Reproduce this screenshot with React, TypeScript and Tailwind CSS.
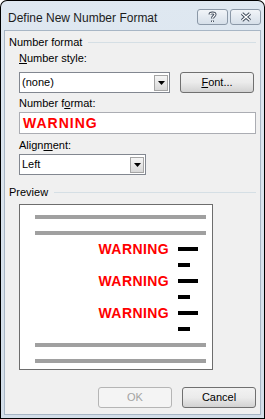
import React from 'react';

const font = { fontFamily: '"Liberation Sans", Arial, sans-serif' };

function DropArrow() {
  return (
    <div className="w-[14px] h-[16px] border border-[#a5a5a5] bg-gradient-to-b from-[#f6f6f6] to-[#d8d8d8] flex items-center justify-center">
      <svg width="7" height="4" viewBox="0 0 7 4">
        <path d="M0 0h7L3.5 4z" fill="#000" />
      </svg>
    </div>
  );
}

function Select({ value, width }: { value: string; width: string }) {
  return (
    <div className={`${width} h-[21px] bg-white border border-[#828790] flex items-center pl-[2px] pr-px`}>
      <span className="flex-1 text-[11px] text-black">{value}</span>
      <DropArrow />
    </div>
  );
}

function Button({ children, disabled }: { children: React.ReactNode; disabled?: boolean }) {
  return (
    <div
      className={
        disabled
          ? 'w-[74px] h-[21px] rounded-[3px] border border-[#b5b5b5] bg-[#f4f4f4] flex items-center justify-center text-[11px] text-[#a3a3a3]'
          : 'w-[74px] h-[21px] rounded-[3px] border border-[#707070] bg-gradient-to-b from-[#f2f2f2] via-[#ebebeb] to-[#d2d2d2] flex items-center justify-center text-[11px] text-black'
      }
    >
      {children}
    </div>
  );
}

function SectionHeader({ label }: { label: string }) {
  return (
    <div className="flex items-center h-[14px] mt-[4px]">
      <span className="text-[11px] text-black whitespace-nowrap">{label}</span>
      <div className="flex-1 h-px bg-[#d5dfe5] ml-[6px]" />
    </div>
  );
}

function Bar() {
  return (
    <div className="h-[16px] flex items-center">
      <div className="w-[171px] h-[4px] bg-[#a0a0a0]" />
    </div>
  );
}

function PreviewRow({ warning, long }: { warning?: boolean; long?: boolean }) {
  return (
    <div className="h-[16px] flex items-center">
      <div className="w-[134px] text-right text-[14px] font-bold leading-none text-[#ff0000] tracking-[0.4px]">
        {warning ? 'WARNING' : ''}
      </div>
      <div className={`ml-[9px] h-[4px] bg-black ${long ? 'w-[20px]' : 'w-[12px]'}`} />
    </div>
  );
}

export default function App() {
  return (
    <div style={font} className="w-[265px] h-[419px] bg-black p-px rounded-t-[7px]">
      <div className="h-full flex flex-col rounded-t-[6px] bg-gradient-to-b from-[#dfe8f1] to-[#d3dee9] px-[3px] pb-[3px]">
        {/* title bar */}
        <div className="h-[29px] flex items-start">
          <span className="mt-[8px] ml-[4px] text-[12px] text-[#1c1c1c] flex-1">Define New Number Format</span>
          <div className="mt-[8px] flex gap-[2px]">
            <div className="w-[31px] h-[16px] rounded-[3px] border border-[#8b98a7] bg-gradient-to-b from-[#f1f4f8] to-[#d6dfe9] flex items-center justify-center">
              <svg width="9" height="12" viewBox="0 0 9 12">
                <path d="M2 3.5C2 1.5 7 1.5 7 3.5C7 5 4.5 5 4.5 7.5M4.5 9.5v1.5" fill="none" stroke="#3a4656" strokeWidth="3" />
                <path d="M2 3.5C2 1.5 7 1.5 7 3.5C7 5 4.5 5 4.5 7.5M4.5 9.5v1.5" fill="none" stroke="#fff" strokeWidth="1.2" />
              </svg>
            </div>
            <div className="w-[31px] h-[16px] rounded-[3px] border border-[#8b98a7] bg-gradient-to-b from-[#f1f4f8] to-[#d6dfe9] flex items-center justify-center">
              <svg width="12" height="10" viewBox="0 0 12 10">
                <path d="M2 1.5l8 7M10 1.5l-8 7" fill="none" stroke="#3a4656" strokeWidth="3.2" />
                <path d="M2 1.5l8 7M10 1.5l-8 7" fill="none" stroke="#fff" strokeWidth="1.4" />
              </svg>
            </div>
          </div>
        </div>
        {/* client area */}
        <div className="flex-1 border border-[#a8b6c5] bg-[#f0f0f0] flex flex-col px-[4px]">
          <SectionHeader label="Number format" />
          <div className="ml-[10px] flex flex-col">
            <div className="mt-[2px] h-[14px] text-[11px] text-black leading-[14px]">
              <span className="underline">N</span>umber style:
            </div>
            <div className="mt-[7px] flex items-center">
              <Select value="(none)" width="w-[151px]" />
              <div className="ml-[10px]">
                <Button>
                  <span className="underline">F</span>ont...
                </Button>
              </div>
            </div>
            <div className="mt-[3px] h-[14px] text-[11px] text-black leading-[14px]">
              Number f<span className="underline">o</span>rmat:
            </div>
            <div className="mt-[2px] h-[22px] bg-white border border-[#abadb3] flex items-center pl-[3px]">
              <span className="text-[14px] font-bold text-[#ff0000] tracking-[1px] leading-none">WARNING</span>
            </div>
            <div className="mt-[4px] h-[14px] text-[11px] text-black leading-[14px]">
              Align<span className="underline">m</span>ent:
            </div>
            <div className="mt-[2px]">
              <Select value="Left" width="w-[127px]" />
            </div>
          </div>
          <div className="mt-[6px]">
            <SectionHeader label="Preview" />
          </div>
          <div className="ml-[10px] mt-[5px] w-[194px] h-[166px] bg-white border border-[#6d6d6d] pt-[4px] pl-[15px]">
            <Bar />
            <Bar />
            <PreviewRow warning long />
            <PreviewRow />
            <PreviewRow warning long />
            <PreviewRow />
            <PreviewRow warning long />
            <PreviewRow />
            <Bar />
            <Bar />
          </div>
          <div className="mt-[17px] flex justify-end gap-[10px]">
            <Button disabled>OK</Button>
            <Button>Cancel</Button>
          </div>
        </div>
      </div>
    </div>
  );
}
